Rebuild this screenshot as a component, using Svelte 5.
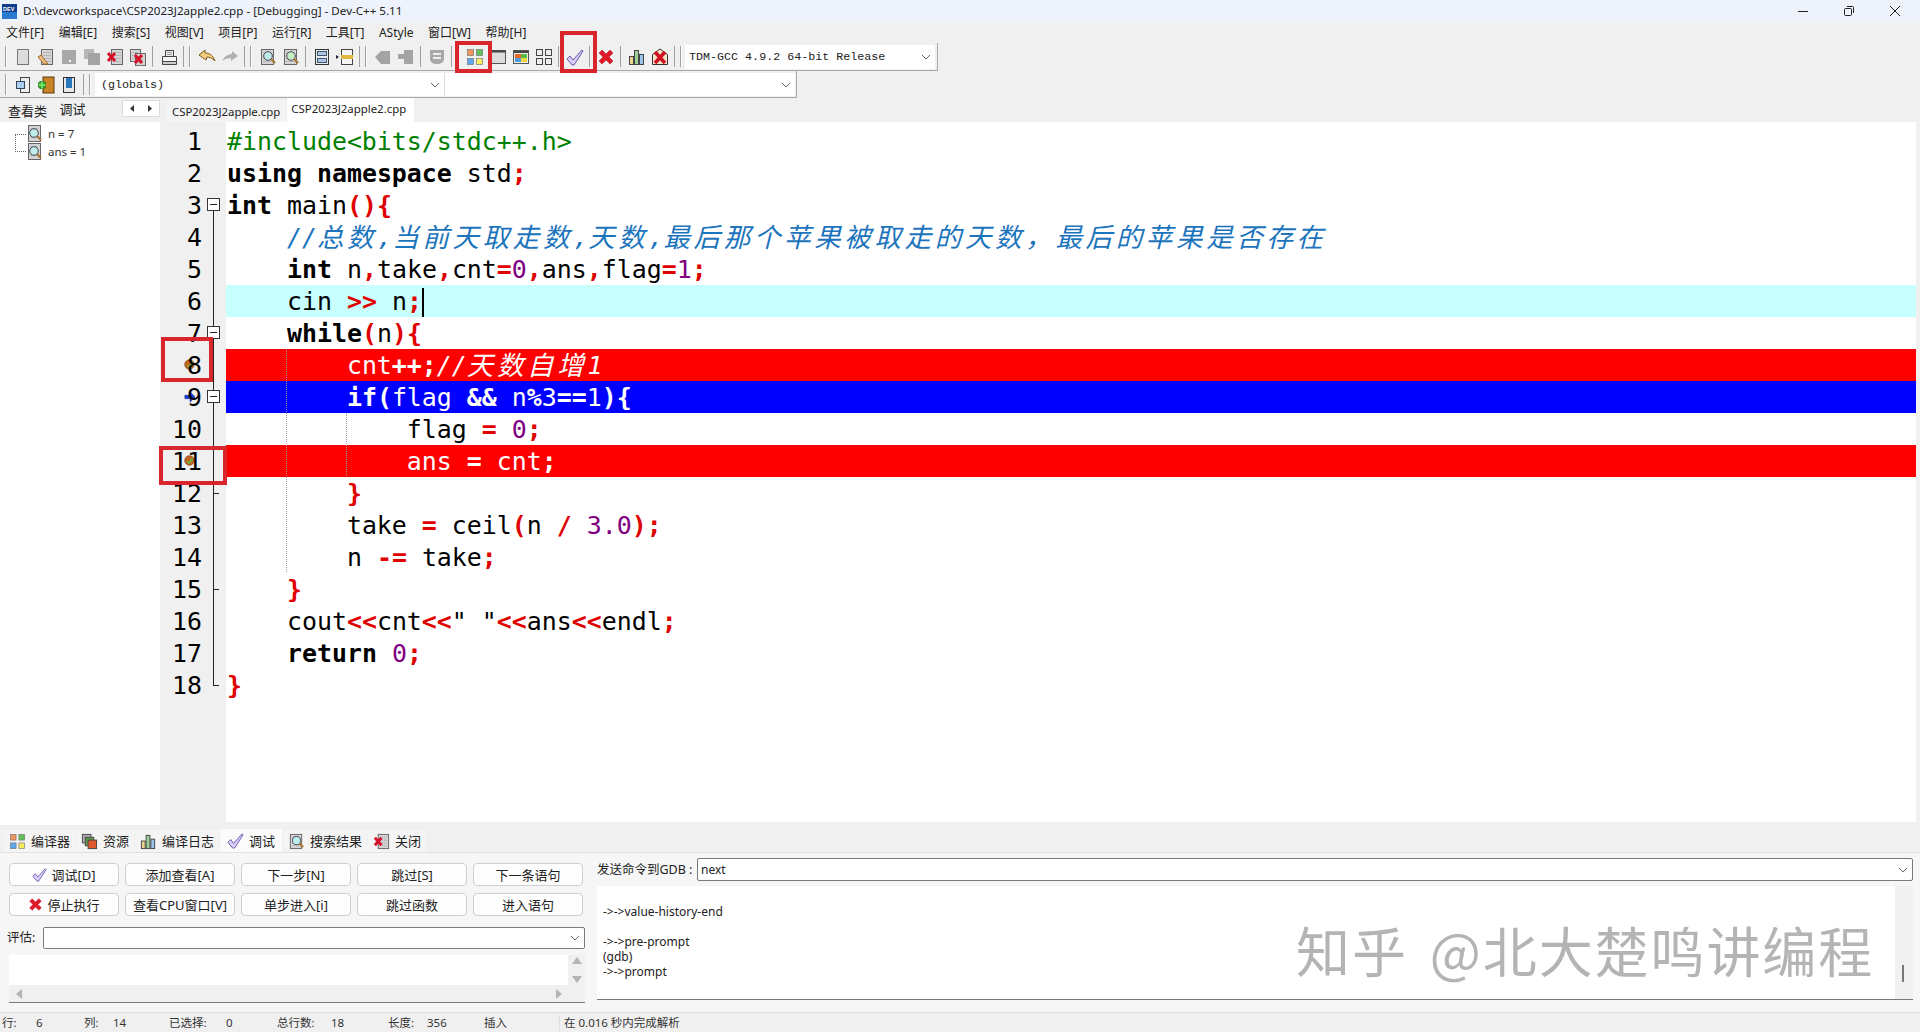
<script>
  const dots = (x, y, w, h) => `<rect x="${x}" y="${y}" width="${w}" height="${h}" fill="#d4d4d4" stroke="#666"/><path d="M${x + 2} ${y + 3}h${w - 4}M${x + 2} ${y + 6}h${w - 4}M${x + 2} ${y + 9}h${w - 4}M${x + 2} ${y + 12}h${w - 4}" stroke="#999" stroke-dasharray="1 1"/>`;
  const redX = (x, y) => `<path d="M${x} ${y}l7 8M${x + 7} ${y}l-7 8" stroke="#d8102a" stroke-width="3"/>`;
  const lens = (x, y) => `<circle cx="${x}" cy="${y}" r="4.3" fill="#bfeeea" stroke="#445"/><path d="M${x + 3} ${y + 3}l4 4" stroke="#a8783a" stroke-width="2.4"/>`;

  const icons = {
    new: `<rect x="3.5" y="1.5" width="11" height="15" fill="#dcdcdc" stroke="#777"/>`,
    open: dots(4.5, 1.5, 11, 15) + `<path d="M1 9l6 7h4l-7-9z" fill="#f0c080" stroke="#a06a28"/>`,
    save: `<path d="M2 2h14v14H2z" fill="#a8a8a8"/><rect x="9" y="12" width="2" height="2" fill="#fff"/>`,
    saveall: `<path d="M1 1h10v10H1z" fill="#b8b8b8"/><path d="M5 5h12v12H5z" fill="#a4a4a4"/>`,
    close: dots(5.5, 1.5, 11, 15) + redX(2, 5),
    closeall: dots(1.5, 1.5, 10, 12) + dots(6.5, 5.5, 10, 12) + redX(6, 7),
    print: `<path d="M5.5 2.5h8v6h-8z" fill="#eee" stroke="#444"/><path d="M2.5 8.5h14v5h-14z" fill="#f4f4f4" stroke="#444"/><path d="M2.5 13.5h14v3h-14z" fill="#ccc" stroke="#444"/><path d="M7 4.5h5M7 6.5h5" stroke="#999"/>`,
    undo: `<path d="M1 7l6-5v3c4 0 8 2 10 8-3-3-6-4-8-4l-1 3z" fill="#f4cd7c" stroke="#7a5a20"/>`,
    redo: `<path d="M17 8l-6-5v3c-4 0-7 2-10 7 3-2 6-3 9-3v3z" fill="#b0b0b0"/>`,
    find: dots(2.5, 1.5, 12, 15) + lens(9, 8),
    replace: dots(2.5, 1.5, 12, 15) + `<circle cx="9" cy="8" r="4.3" fill="#c6efc4" stroke="#445"/><path d="M12 11l4 4" stroke="#a8783a" stroke-width="2.4"/>`,
    indent: `<rect x="2.5" y="1.5" width="13" height="15" fill="#e6ecf4" stroke="#333"/><rect x="4.5" y="3.5" width="9" height="4" fill="#a9c4e4" stroke="#456"/><rect x="4.5" y="10.5" width="9" height="4" fill="#a9c4e4" stroke="#456"/>`,
    unindent: `<path d="M0 7l3 2-3 2z" fill="#223"/><rect x="5.5" y="1.5" width="11" height="15" fill="#f6f6f6" stroke="#444"/><rect x="5" y="7" width="12" height="4" fill="#e0b840"/>`,
    back: `<path d="M1 9l6-6h9v13H7z" fill="#a4a4a4"/>`,
    forward: `<path d="M1 6h6V2h9v14H7v-5H1z" fill="#a4a4a4"/>`,
    shield: `<path d="M2 2h14v9c0 3-3 5-7 5s-7-2-7-5z" fill="#a8a8a8"/><path d="M5 6h8M5 10h8" stroke="#eee" stroke-width="2"/>`,
    compile: `<rect x="1.5" y="1.5" width="6" height="6" fill="#f0945c" stroke="#777" stroke-width=".7"/><rect x="10.5" y="1.5" width="6" height="6" fill="#62c05a" stroke="#777" stroke-width=".7"/><rect x="1.5" y="10.5" width="6" height="6" fill="#5ca8ec" stroke="#777" stroke-width=".7"/><rect x="10.5" y="10.5" width="6" height="6" fill="#f8ec5c" stroke="#777" stroke-width=".7"/>`,
    run: `<rect x="1.5" y="2.5" width="15" height="13" fill="#dcdcdc" stroke="#555"/><rect x="1.5" y="2.5" width="15" height="2" fill="#444"/>`,
    comprun: `<rect x="1.5" y="2.5" width="15" height="13" fill="#eee" stroke="#555"/><rect x="2" y="3" width="14" height="2" fill="#444"/><rect x="3" y="6" width="6" height="4" fill="#e8682a"/><rect x="9" y="6" width="6" height="4" fill="#5cb848"/><rect x="3" y="10" width="6" height="4" fill="#4c9ce0"/><rect x="9" y="10" width="6" height="4" fill="#ecd83c"/>`,
    rebuild: `<rect x="1.5" y="1.5" width="6" height="6" fill="#eee" stroke="#444"/><rect x="10.5" y="1.5" width="6" height="6" fill="#eee" stroke="#444"/><rect x="1.5" y="10.5" width="6" height="6" fill="#eee" stroke="#444"/><rect x="10.5" y="10.5" width="6" height="6" fill="#eee" stroke="#444"/>`,
    check: `<path d="M1 11l3-3 3 4L16 2l1 1L8 17h-2z" fill="#d8ccf8" stroke="#6a58a8"/>`,
    stop: `<path d="M2 5l3-3 4 4 4-4 3 3-4 4 4 4-3 3-4-4-4 4-3-3 4-4z" fill="#e01828" stroke="#a01018" stroke-width=".5"/>`,
    chart: `<rect x="1.5" y="8.5" width="4" height="8" fill="#f0d48c" stroke="#444"/><rect x="6.5" y="2.5" width="4" height="14" fill="#9cd098" stroke="#444"/><rect x="11.5" y="6.5" width="4" height="10" fill="#9cc4ec" stroke="#444"/>`,
    chartx: `<path d="M1.5 16.500V6.500L9 1l7.500 5.500v10z" fill="#f4e4c8" stroke="#333"/><path d="M4 4l10 11M14 4L4 15" stroke="#d01020" stroke-width="3.6"/>`,
    goto: `<rect x="6.5" y="1.5" width="9" height="15" fill="#eee" stroke="#444"/><rect x="2.5" y="5.5" width="8" height="7" fill="#a9d0f0" stroke="#345"/>`,
    addwatch: `<rect x="6" y="1" width="11" height="16" fill="#c88424" stroke="#5a3a10"/><path d="M5 5v8M1 9h8" stroke="#207a20" stroke-width="5"/><path d="M5 5.500v7M1.500 9h7" stroke="#6ce05c" stroke-width="2.500"/>`,
    bookmark: `<rect x="3.5" y="1.5" width="11" height="15" fill="#e8e8e8" stroke="#333"/><rect x="6" y="2" width="6" height="10" fill="#2878c0"/>`,
    stack: `<rect x="1.5" y="1.5" width="9" height="9" fill="#b0b0b0" stroke="#444"/><rect x="4.5" y="4.500" width="9" height="9" fill="#58a048" stroke="#444"/><rect x="7.500" y="7.500" width="9" height="9" fill="#e0582c" stroke="#444"/>`,
    watch: dots(2.5, 0.5, 12, 16) + lens(8, 8)
  };

  const tb1 = [
    { gap: 'lead', items: ['new', 'open', 'save', 'saveall', 'close', 'closeall'] },
    { gap: 'sep', items: ['print'] },
    { gap: 'grip', items: ['undo', 'redo'] },
    { gap: 'grip', items: ['find', 'replace'] },
    { gap: 'sep', items: ['indent', 'unindent'] },
    { gap: 'grip', items: ['back', 'forward'] },
    { gap: 'sep', items: ['shield'] },
    { gap: 'grip', items: ['compile', 'run', 'comprun', 'rebuild'] },
    { gap: 'sep', items: ['check'] },
    { gap: 'sep', items: ['stop'] },
    { gap: 'sep', items: ['chart', 'chartx'] }
  ];

  const menu = ['文件[F]', '编辑[E]', '搜索[S]', '视图[V]', '项目[P]', '运行[R]', '工具[T]', 'AStyle', '窗口[W]', '帮助[H]'];

  const source = [
    '#include<bits/stdc++.h>',
    'using namespace std;',
    'int main(){',
    '    //总数,当前天取走数,天数,最后那个苹果被取走的天数，最后的苹果是否存在',
    '    int n,take,cnt=0,ans,flag=1;',
    '    cin >> n;',
    '    while(n){',
    '        cnt++;//天数自增1',
    '        if(flag && n%3==1){',
    '            flag = 0;',
    '            ans = cnt;',
    '        }',
    '        take = ceil(n / 3.0);',
    '        n -= take;',
    '    }',
    '    cout<<cnt<<" "<<ans<<endl;',
    '    return 0;',
    '}'
  ];

  const rowClass = { 6: 'cyan', 8: 'red', 9: 'blue', 11: 'red' };
  const folds = { 3: 'open first', 7: 'open', 9: 'open', 12: 'end', 15: 'end', 18: 'last' };

  function tokenize(line) {
    if (line.startsWith('#')) return [{ t: line, c: 'pre' }];
    const out = [];
    const re = /(\/\/.*$)|("[^"]*")|\b(int|using|namespace|while|if|return)\b|(\d+(?:\.\d+)?)|((?:(?!\/\/)[(){};,<>=+\-*\/%&])+)|([^\s(){};,<>=+\-*\/%&"\d]+|\s+|\d)/g;
    for (const m of line.matchAll(re)) {
      if (m[1]) {
        for (const part of m[1].split(/([\u3000-\u9fff\uff00-\uffef]+)/)) {
          if (part) out.push({ t: part, c: /[\u3000-\u9fff\uff00-\uffef]/.test(part) ? 'cmt cjk' : 'cmt' });
        }
      } else if (m[2]) out.push({ t: m[2], c: 'str' });
      else if (m[3]) out.push({ t: m[3], c: 'kw' });
      else if (m[4]) out.push({ t: m[4], c: 'num' });
      else if (m[5]) out.push({ t: m[5], c: 'sym' });
      else out.push({ t: m[6], c: '' });
    }
    return out;
  }

  const lines = source.map((text, i) => {
    const n = i + 1;
    return {
      n,
      tokens: tokenize(text),
      cls: rowClass[n] || '',
      fold: folds[n] || (n > 3 ? 'line' : ''),
      g1: n >= 8 && n <= 14,
      g2: n === 10 || n === 11
    };
  });

  const bottomTabs = [
    { icon: 'compile', label: '编译器' },
    { icon: 'stack', label: '资源' },
    { icon: 'chart', label: '编译日志' },
    { icon: 'check', label: '调试', active: true },
    { icon: 'find', label: '搜索结果' },
    { icon: 'close', label: '关闭' }
  ];

  const buttons = [
    { label: '调试[D]', icon: 'check' }, { label: '添加查看[A]' }, { label: '下一步[N]' }, { label: '跳过[S]' }, { label: '下一条语句' },
    { label: '停止执行', icon: 'stop' }, { label: '查看CPU窗口[V]' }, { label: '单步进入[i]' }, { label: '跳过函数' }, { label: '进入语句' }
  ];

  const status = [
    { k: '行:', v: '6', w: 82, o: 34 },
    { k: '列:', v: '14', w: 85, o: 29 },
    { k: '已选择:', v: '0', w: 108, o: 57 },
    { k: '总行数:', v: '18', w: 111, o: 54 },
    { k: '长度:', v: '356', w: 92, o: 39 }
  ];

  const marks = [
    { x: 455, y: 41, w: 37, h: 32 },
    { x: 560, y: 31, w: 37, h: 42 },
    { x: 161, y: 337, w: 52, h: 45 },
    { x: 159, y: 446, w: 68, h: 39 }
  ];
</script>

{#snippet icon(name, size = 18)}
  <svg class="ico" width={size} height={size} viewBox="0 0 18 18">{@html icons[name]}</svg>
{/snippet}

{#snippet chevron()}
  <svg class="chev" width="10" height="6" viewBox="0 0 10 6"><path d="M1 1l4 4 4-4" fill="none" stroke="#666"/></svg>
{/snippet}

{#snippet bpDot()}
  <svg class="mark" width="11" height="11" viewBox="0 0 14 14"><circle cx="7" cy="7" r="6" fill="#c8641e" stroke="#7a3a10"/><path d="M4 8l3 2 4-6" fill="none" stroke="#5cc04c" stroke-width="2"/></svg>
{/snippet}

<div class="app">
  <header class="title">
    <svg class="logo" width="15" height="15" viewBox="0 0 15 15"><rect width="15" height="15" fill="#123c8c"/><rect y="8" width="15" height="7" fill="#2a7ad0"/><text x="1" y="6.500" font-size="5.500" fill="#fff" font-family="Liberation Sans" font-weight="700">DEV</text></svg>
    <span>D:\devcworkspace\CSP2023J2apple2.cpp - [Debugging] - Dev-C++ 5.11</span>
    <div class="winbtns">
      <svg width="14" height="14" viewBox="0 0 14 14"><path d="M2 7.500h10" stroke="#222"/></svg>
      <svg width="14" height="14" viewBox="0 0 14 14"><rect x="2.500" y="4.500" width="7" height="7" rx="1" fill="none" stroke="#222"/><path d="M5 2.500h5.500a1 1 0 0 1 1 1V9" fill="none" stroke="#222"/></svg>
      <svg width="14" height="14" viewBox="0 0 14 14"><path d="M2 2l10 10M12 2L2 12" stroke="#222"/></svg>
    </div>
  </header>

  <nav class="menu">
    {#each menu as m}<span>{m}</span>{/each}
  </nav>

  <div class="toolbar tb1">
    {#each tb1 as group}
      <i class={group.gap}></i>
      {#each group.items as it}
        <span class="tbtn">{@render icon(it)}</span>
      {/each}
    {/each}
    <i class="grip last"></i>
    <div class="combo compiler"><span>TDM-GCC 4.9.2 64-bit Release</span>{@render chevron()}</div>
  </div>

  <div class="toolbar tb2">
    <i class="lead"></i>
    {#each ['goto', 'addwatch', 'bookmark'] as it}
      <span class="tbtn">{@render icon(it)}</span>
    {/each}
    <i class="grip"></i>
    <div class="combo globals"><span>(globals)</span>{@render chevron()}</div>
    <div class="combo funcs"><span></span>{@render chevron()}</div>
  </div>

  <main class="main">
    <aside class="side">
      <div class="side-tabs">
        <span class="stab">查看类</span>
        <span class="stab on">调试</span>
        <div class="arrows">
          <svg width="18" height="15" viewBox="0 0 18 15"><path d="M11 4v7L7 7.500z" fill="#333"/></svg>
          <svg width="18" height="15" viewBox="0 0 18 15"><path d="M7 4v7l4-3.500z" fill="#333"/></svg>
        </div>
      </div>
      <div class="tree">
        <div class="node first"><span class="conn"></span>{@render icon('watch', 18)}<span>n = 7</span></div>
        <div class="node"><span class="conn"></span>{@render icon('watch', 18)}<span>ans = 1</span></div>
      </div>
    </aside>

    <section class="editor">
      <div class="ed-tabs">
        <span class="etab">CSP2023J2apple.cpp</span>
        <span class="etab on">CSP2023J2apple2.cpp</span>
      </div>
      <div class="code">
        {#each lines as l}
          <div class="row {l.cls}">
            <div class="gutter">
              {#if l.n === 8 || l.n === 11}
                {@render bpDot()}
              {:else if l.n === 9}
                <svg class="mark" width="12" height="12" viewBox="0 0 14 14"><path d="M1 5h6V1l6 6-6 6V9H1z" fill="#1840d8" stroke="#102080" stroke-width=".6"/></svg>
              {/if}
              <span class="lnum">{l.n}</span>
              <span class="fold {l.fold}">
                {#if l.fold.startsWith('open')}<b class="box"></b>{/if}
              </span>
            </div>
            <div class="text">{#if l.g1}<i class="guide g1"></i>{/if}{#if l.g2}<i class="guide g2"></i>{/if}{#each l.tokens as tok}<span class={tok.c}>{tok.t}</span>{/each}{#if l.n === 6}<i class="caret"></i>{/if}</div>
          </div>
        {/each}
      </div>
    </section>
  </main>

  <section class="bottom">
    <div class="b-tabs">
      {#each bottomTabs as tab}
        <span class="btab" class:on={tab.active}>{@render icon(tab.icon, 17)}<span>{tab.label}</span></span>
      {/each}
    </div>
    <div class="b-body">
      <div class="b-left">
        <div class="btns">
          {#each buttons as b}
            <button>{#if b.icon}{@render icon(b.icon, 15)}{/if}{b.label}</button>
          {/each}
        </div>
        <div class="eval">
          <label for="ev">评估:</label>
          <div class="combo evalbox" id="ev"><span></span>{@render chevron()}</div>
        </div>
        <div class="memo">
          <div class="memo-in"></div>
          <div class="vbar">
            <svg width="12" height="30" viewBox="0 0 12 30"><path d="M6 2l5 7H1zM6 28l5-7H1z" fill="#b4b4b4"/></svg>
          </div>
          <div class="hbar">
            <svg width="8" height="12" viewBox="0 0 8 12"><path d="M1 6l6-5v10z" fill="#b4b4b4"/></svg>
            <svg width="8" height="12" viewBox="0 0 8 12"><path d="M7 6L1 1v10z" fill="#b4b4b4"/></svg>
          </div>
        </div>
      </div>
      <div class="b-right">
        <div class="gdb-row">
          <span class="gdb-label">发送命令到GDB :</span>
          <div class="combo gdb-input"><span>next</span>{@render chevron()}</div>
        </div>
        <div class="gdb-out">
          <pre>{'\n->->value-history-end\n\n->->pre-prompt\n(gdb)\n->->prompt'}</pre>
          <div class="gdb-bar"><i></i></div>
          <div class="watermark">知乎 @北大楚鸣讲编程</div>
        </div>
      </div>
    </div>
  </section>

  <footer class="status">
    {#each status as s}
      <span class="cell" style="width:{s.w}px"><span style="width:{s.o}px">{s.k}</span><span>{s.v}</span></span>
    {/each}
    <span class="cell ins">插入</span>
    <span class="cell">在 0.016 秒内完成解析</span>
  </footer>

  {#each marks as m}
    <div class="callout" style="left:{m.x}px;top:{m.y}px;width:{m.w}px;height:{m.h}px"></div>
  {/each}
</div>

<style>
  :global(body) {
    margin: 0;
    background: #f0f0f0;
  }

  .app {
    position: relative;
    width: 1920px;
    height: 1032px;
    display: flex;
    flex-direction: column;
    overflow: hidden;
    background: #f0f0f0;
    color: #222;
    font: 12px/16px "Noto Sans", "Noto Sans CJK SC", sans-serif;
  }

  .ico {
    flex: none;
    display: block;
  }

  /* Title + menu */
  .title {
    height: 22px;
    flex: none;
    display: flex;
    align-items: center;
    background: #eef2fa;
    padding-left: 2px;
    gap: 6px;
    font-size: 11.6px;
  }

  .winbtns {
    margin-left: auto;
    display: flex;
    gap: 32px;
    padding-right: 18px;
  }

  .menu {
    height: 21px;
    flex: none;
    display: flex;
    align-items: center;
    gap: 14.5px;
    padding-left: 6px;
    font-size: 12px;
  }

  /* Toolbars */
  .toolbar {
    display: flex;
    align-items: center;
    flex: none;
    box-sizing: border-box;
    border-bottom: 1px solid #a8a8a8;
    border-right: 1px solid #a8a8a8;
  }

  .tb1 {
    width: 938px;
    height: 28px;
  }

  .tb2 {
    width: 797px;
    height: 27px;
    padding-top: 1px;
  }

  .tbtn {
    width: 23px;
    height: 23px;
    display: flex;
    align-items: center;
    justify-content: center;
  }

  .toolbar i {
    flex: none;
    height: 21px;
    box-sizing: border-box;
  }

  .lead {
    width: 11px;
    background: linear-gradient(90deg, transparent 5px, #a0a0a0 5px, #a0a0a0 6px, #fff 6px, #fff 7px, transparent 7px);
  }

  .sep {
    width: 8px;
    background: linear-gradient(90deg, transparent 3px, #a0a0a0 3px, #a0a0a0 4px, transparent 4px);
  }

  .grip {
    width: 15px;
    background: linear-gradient(90deg, transparent 3px, #a0a0a0 3px, #a0a0a0 4px, transparent 4px, transparent 9px, #a0a0a0 9px, #a0a0a0 10px, #fff 10px, #fff 11px, transparent 11px);
  }

  .grip.last {
    width: 14px;
  }

  .combo {
    display: flex;
    align-items: center;
    justify-content: space-between;
    box-sizing: border-box;
    background: #fff;
    padding: 0 4px;
  }

  .compiler,
  .globals,
  .funcs {
    font: 11.7px "Liberation Mono", monospace;
    color: #222;
  }

  .compiler {
    width: 250px;
    height: 24px;
  }

  .globals {
    width: 350px;
    height: 23px;
    padding-left: 6px;
    border-right: 1px solid #ddd;
  }

  .funcs {
    width: 350px;
    height: 23px;
  }

  /* Main area */
  .main {
    flex: 1;
    display: flex;
    min-height: 0;
  }

  .side {
    width: 160px;
    margin-right: 7px;
    display: flex;
    flex-direction: column;
    flex: none;
  }

  .side-tabs {
    height: 24px;
    flex: none;
    display: flex;
    align-items: center;
    padding: 0 0 0 8px;
    font-size: 13px;
  }

  .stab {
    width: 52px;
    padding-top: 2px;
  }

  .stab.on {
    padding-top: 0;
    margin-bottom: 3px;
    width: 63px;
  }

  .arrows {
    display: flex;
    background: #fff;
    border: 1px solid #ddd;
    margin-bottom: 4px;
  }

  .tree {
    flex: 1;
    background: #fff;
    padding: 3px 0 0 15px;
    font-size: 11.5px;
  }

  .node {
    height: 18px;
    display: flex;
    align-items: center;
    color: #333;
    gap: 4px;
    position: relative;
  }

  .conn {
    width: 11px;
    margin-right: -4px;
    height: 18px;
    margin-bottom: 18px;
    box-sizing: border-box;
    border-left: 1px dotted #666;
    border-bottom: 1px dotted #666;
  }

  .node.first .conn {
    height: 9px;
    margin-bottom: 8px;
    border-left: 0;
  }

  .editor {
    flex: 1;
    display: flex;
    flex-direction: column;
    min-width: 0;
  }

  .ed-tabs {
    height: 24px;
    flex: none;
    display: flex;
    font-size: 11.4px;
    align-items: flex-end;
  }

  .etab {
    height: 22px;
    box-sizing: border-box;
    padding: 4px 6px 0 5px;
    margin-right: 1px;
    background: #f4f4f4;
    white-space: nowrap;
  }

  .etab.on {
    background: #fff;
    height: 24px;
    padding: 3px 8px 0 4px;
  }

  .code {
    flex: 1;
    margin-right: 4px;
    margin-bottom: 3px;
    padding-top: 3px;
    background: #fff;
    font: 24.9px/32px "DejaVu Sans Mono", monospace;
    color: #000;
    box-shadow: inset 59px 0 0 #f0f0f0;
  }

  .row {
    height: 32px;
    display: flex;
  }

  .gutter {
    width: 59px;
    flex: none;
    display: flex;
    position: relative;
    background: #f0f0f0;
  }

  .lnum {
    position: relative;
    top: 1px;
    width: 35px;
    text-align: right;
  }

  .fold {
    position: relative;
    width: 13px;
    margin-left: 5px;
  }

  .fold::before {
    content: '';
    position: absolute;
    left: 6px;
    top: 0;
    bottom: 0;
    border-left: 1px solid #222;
  }

  .fold:not(.line):not(.open):not(.end):not(.last)::before {
    display: none;
  }

  .fold.first::before {
    top: 16px;
  }

  .fold.last::before {
    bottom: 16px;
  }

  .fold.end::after,
  .fold.last::after {
    content: '';
    position: absolute;
    left: 6px;
    top: 16px;
    width: 6px;
    border-top: 1px solid #222;
  }

  .box {
    position: absolute;
    left: 0;
    top: 9px;
    width: 13px;
    height: 13px;
    box-sizing: border-box;
    border: 1px solid #333;
    background: linear-gradient(#222, #222) center / 7px 1px no-repeat #fff;
  }

  .mark {
    position: absolute;
    left: 17px;
    top: 10px;
  }

  .text {
    flex: 1;
    position: relative;
    padding: 1px 0 0 1px;
    height: 31px;
    white-space: pre;
  }

  .guide {
    position: absolute;
    top: 0;
    bottom: 0;
    width: 1px;
    background: repeating-linear-gradient(#999 0 1px, transparent 1px 2px);
  }

  .g1 {
    left: 60px;
  }

  .g2 {
    left: 120px;
  }

  .caret {
    display: inline-block;
    width: 2px;
    height: 29px;
    background: #000;
    vertical-align: -7px;
    margin-right: -2px;
  }

  .kw {
    font-weight: 700;
  }

  .sym {
    font-weight: 700;
    color: #e00000;
  }

  .num {
    color: #800080;
  }

  .pre {
    color: #008000;
  }

  .str {
    color: #000;
  }

  .cmt {
    color: #1c74bc;
    font-style: italic;
  }

  .cjk {
    position: relative;
    top: 1px;
    font: italic 26.5px/0 "Noto Sans CJK SC", sans-serif;
    letter-spacing: 3.65px;
  }

  .cyan {
    background: #c8ffff;
  }

  .red {
    background: #ff0000;
  }

  .blue {
    background: #0000ff;
  }

  .red .text span,
  .blue .text span {
    color: #fff;
  }

  /* Bottom panel */
  .bottom {
    height: 187px;
    flex: none;
    display: flex;
    flex-direction: column;
  }

  .b-tabs {
    height: 22px;
    margin-top: 5px;
    flex: none;
    display: flex;
    padding-left: 4px;
    font-size: 13px;
  }

  .btab {
    display: flex;
    align-items: center;
    gap: 5px;
    padding: 0 5px;
    background: #f4f4f4;
    margin-right: 1px;
    white-space: nowrap;
  }

  .btab.on {
    background: #fbfbfb;
    padding: 0 7px;
    margin-top: -1px;
  }

  .b-body {
    flex: 1;
    display: flex;
    background: #f6f6f6;
    border-top: 1px solid #e2e2e2;
    padding: 10px 7px 12px 9px;
    gap: 12px;
    min-height: 0;
  }

  .b-left {
    width: 576px;
    flex: none;
    display: flex;
    flex-direction: column;
  }

  .btns {
    display: grid;
    grid-template-columns: repeat(5, 110px);
    column-gap: 6px;
    row-gap: 7px;
  }

  button {
    height: 23px;
    padding: 0;
    display: flex;
    align-items: center;
    justify-content: center;
    gap: 4px;
    background: #fdfdfd;
    border: 1px solid #d0d0d0;
    border-radius: 4px;
    font: 13px "Noto Sans", "Noto Sans CJK SC", sans-serif;
    color: #222;
  }

  .eval {
    display: flex;
    align-items: center;
    margin: 11px 0 6px -2px;
    font-size: 12.5px;
  }

  .eval label {
    width: 36px;
  }

  .evalbox {
    flex: 1;
    height: 22px;
    border: 1px solid #7a7a7a;
    border-radius: 2px;
  }

  .memo {
    flex: 1;
    display: grid;
    grid-template-columns: 1fr 17px;
    grid-template-rows: 1fr 17px;
    background: #fff;
    border-bottom: 1px solid #777;
  }

  .vbar {
    background: #f0f0f0;
    display: flex;
    justify-content: center;
    align-items: center;
  }

  .hbar {
    grid-column: 1 / 3;
    background: #f0f0f0;
    display: flex;
    justify-content: space-between;
    align-items: center;
    padding: 0 22px 0 6px;
  }

  .b-right {
    flex: 1;
    display: flex;
    flex-direction: column;
    gap: 5px;
    margin-top: -5px;
    min-width: 0;
  }

  .gdb-row {
    display: flex;
    align-items: center;
    height: 23px;
    font-size: 12.5px;
  }

  .gdb-label {
    width: 100px;
    flex: none;
  }

  .gdb-input {
    flex: 1;
    height: 23px;
    border: 1px solid #7a7a7a;
    border-radius: 2px;
    padding-left: 3px;
    color: #222;
    font-size: 12px;
  }

  .gdb-out {
    flex: 1;
    position: relative;
    display: flex;
    justify-content: space-between;
    background: #fff;
    border-bottom: 1px solid #777;
  }

  pre {
    margin: 0;
    padding: 3px 0 0 6px;
    font: 12px/15px "Noto Sans", sans-serif;
    color: #222;
  }

  .gdb-bar {
    width: 18px;
    background: #f0f0f0;
    position: relative;
  }

  .gdb-bar i {
    position: absolute;
    left: 7px;
    top: 79px;
    width: 2px;
    height: 17px;
    background: #777;
  }

  .watermark {
    position: absolute;
    left: 699px;
    top: 33px;
    font: 400 54px/62px "Noto Sans CJK SC", sans-serif;
    color: #b4b4b4;
    white-space: nowrap;
    letter-spacing: 1.9px;
    word-spacing: 8px;
  }

  .status {
    height: 20px;
    flex: none;
    box-sizing: border-box;
    display: flex;
    align-items: center;
    padding-left: 2px;
    border-top: 1px solid #dcdcdc;
    font-size: 11.5px;
    color: #333;
  }

  .cell {
    display: flex;
    white-space: nowrap;
  }

  .cell.ins {
    width: 80px;
    box-sizing: border-box;
    padding-left: 4px;
    border-right: 1px solid #ddd;
    margin-right: 4px;
  }

  .callout {
    position: absolute;
    box-sizing: border-box;
    border: 4px solid #d8262c;
    pointer-events: none;
  }
</style>
